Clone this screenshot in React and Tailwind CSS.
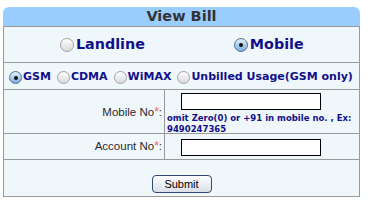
import React from 'react';

function Radio({ checked, small }) {
  const size = small ? 'w-[13px] h-[13px]' : 'w-[14px] h-[14px]';
  return (
    <span
      className={`${size} inline-flex items-center justify-center rounded-full border shrink-0 ${
        checked
          ? 'border-[#56718f] bg-linear-to-b from-[#e4f1fc] to-[#79aee0]'
          : 'border-[#a2a2a2] bg-linear-to-b from-[#ffffff] to-[#d9d9d9]'
      }`}
    >
      {checked && <span className="w-[4px] h-[4px] rounded-full bg-[#111]" />}
    </span>
  );
}

function Option({ label, checked }) {
  return (
    <label className="flex items-center gap-[1px]">
      <Radio small checked={checked} />
      <span>{label}</span>
    </label>
  );
}

function Label({ text }) {
  return (
    <div className="flex items-center justify-end pr-[2px] text-[11.5px] text-[#2b2b2b] font-['Liberation_Sans',sans-serif]">
      {text}
      <span className="text-[#f25c5c] text-[12px] relative -top-[1px]">*</span>:
    </div>
  );
}

export default function App() {
  return (
    <div className="w-[371px] h-[209px] bg-white pt-[7px] pl-[3px] font-['DejaVu_Sans',sans-serif]">
      <div className="w-[357px]">
        {/* header */}
        <div className="h-[19px] bg-[#99ccff] rounded-t-[6px] flex items-center justify-center text-[14.5px] font-bold text-[#333] leading-none">
          View Bill
        </div>

        <div className="border border-[#999] bg-[#f0f7fb]">
          {/* Landline / Mobile */}
          <div className="h-[35px] flex items-center text-[14.3px] font-bold text-[#10108a]">
            <label className="flex items-center gap-[2px] ml-[56px]">
              <Radio />
              <span>Landline</span>
            </label>
            <label className="flex items-center gap-[2px] ml-[89px]">
              <Radio checked />
              <span>Mobile</span>
            </label>
          </div>

          {/* service type */}
          <div className="h-[27px] border-t border-[#999] flex items-center gap-[6px] pl-[5px] pt-[3px] text-[11px] font-bold text-[#10108a]">
            <Option label="GSM" checked />
            <Option label="CDMA" />
            <Option label="WiMAX" />
            <Option label="Unbilled Usage(GSM only)" />
          </div>

          {/* mobile no */}
          <div className="h-[44px] border-t border-[#999] grid grid-cols-[160px_1fr]">
            <Label text="Mobile No" />
            <div className="border-l border-[#999] pl-[2px] pt-[3px]">
              <div className="ml-[14px] w-[140px] h-[17px] border border-black bg-white" />
              <p className="mt-[3px] text-[8.5px] leading-[11px] font-bold text-[#10108a]">
                omit Zero(0) or +91 in mobile no. , Ex:
                <br />
                9490247365
              </p>
            </div>
          </div>

          {/* account no */}
          <div className="h-[26px] border-t border-[#999] grid grid-cols-[160px_1fr]">
            <Label text="Account No" />
            <div className="border-l border-[#999] pl-[16px] pt-[5px]">
              <div className="w-[140px] h-[17px] border border-black bg-white" />
            </div>
          </div>

          {/* submit */}
          <div className="h-[37px] border-t border-[#999] flex justify-center pt-[15px]">
            <button className="w-[60px] h-[18px] rounded-[4px] border border-[#2c4a74] bg-linear-to-b from-white to-[#dcdfe8] text-[11px] leading-none text-black font-['Liberation_Sans',sans-serif]">
              Submit
            </button>
          </div>
        </div>
      </div>
    </div>
  );
}
